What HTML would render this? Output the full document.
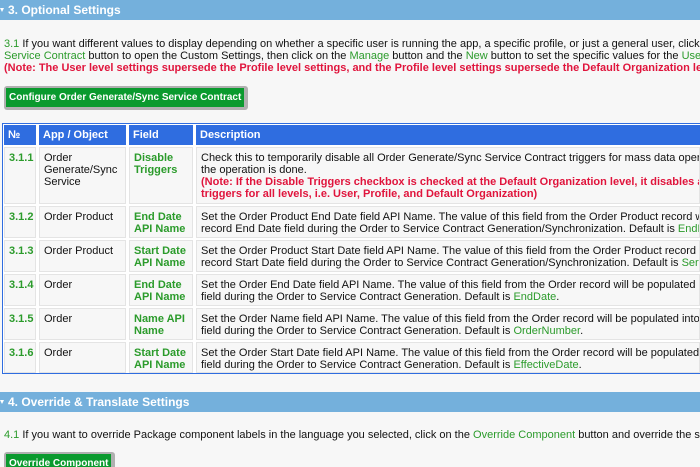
<!DOCTYPE html><html><head><style>
body{margin:0;width:700px;height:467px;overflow:hidden;background:#f7f7f7;font-family:"Liberation Sans",Arial,sans-serif;font-size:11px;color:#111;position:relative}
#w{position:absolute;left:0;top:0;width:700px;height:467px;overflow:hidden}
.sec{position:absolute;left:0;width:700px;height:20px;background:#74b0dc;color:#fff;font-weight:bold;font-size:12px;line-height:20px}
.sec span{position:absolute;left:8px}
.sec i{position:absolute;left:0;top:8px;border-left:2px solid transparent;border-right:2px solid transparent;border-top:4px solid #fff;width:0;height:0}
.p{position:absolute;left:4px;width:696px;overflow:hidden;white-space:nowrap;line-height:12px}
.g{color:#2b9b2b}.r{color:#e0143c;font-weight:bold}
.btn{position:absolute;background:#b0b0b0;border-radius:3px;padding:2px 4px 3px 2px}
.btn div{background:#0a9a2e;color:#fff;font-weight:bold;font-size:10px;padding:0 3px;line-height:19px;white-space:nowrap}
.tbl{position:absolute;left:2px;top:123px;width:698px;height:251px;border:1px solid #2f6de0;border-right:none;background:#fff;box-sizing:border-box}
.c{position:absolute;overflow:hidden;white-space:nowrap;line-height:12px;background:#f7f7f7;border:1px solid #e4e4e4;box-sizing:border-box;padding:4px 0 0 4px}
.h{background:#2f6de0;color:#fff;font-weight:bold;font-size:11px;padding-top:4px;border:none}
.n{color:#2b9b2b;font-weight:bold}
.f{color:#2b9b2b;font-weight:bold}
.d{width:504px}
</style></head><body><div id="w">
<div class="sec" style="top:0"><i></i><span>3. Optional Settings</span></div>
<div class="p" style="top:38px"><span class="g">3.1</span> If you want different values to display depending on whether a specific user is running the app, a specific profile, or just a general user, click on the <span class="g">Configure Order Generate/Sync</span></div>
<div class="p" style="top:50px"><span class="g">Service Contract</span> button to open the Custom Settings, then click on the <span class="g">Manage</span> button and the <span class="g">New</span> button to set the specific values for the <span class="g">User</span></div>
<div class="p r" style="top:62px;font-weight:bold">(Note: The User level settings supersede the Profile level settings, and the Profile level settings supersede the Default Organization level settings.)</div>
<div class="btn" style="left:4px;top:86px"><div>Configure Order Generate/Sync Service Contract</div></div>
<div class="tbl"></div>
<div class="c h" style="left:4px;top:125px;width:32px;height:20px">№</div>
<div class="c h" style="left:39px;top:125px;width:87px;height:20px">App / Object</div>
<div class="c h" style="left:129px;top:125px;width:64px;height:20px">Field</div>
<div class="c h d" style="left:196px;top:125px;height:20px">Description</div>

<div class="c n" style="left:4px;top:147px;width:32px;height:57px">3.1.1</div>
<div class="c" style="left:39px;top:147px;width:87px;height:57px">Order<br>Generate/Sync<br>Service</div>
<div class="c f" style="left:129px;top:147px;width:64px;height:57px">Disable<br>Triggers</div>
<div class="c d" style="left:196px;top:147px;height:57px">Check this to temporarily disable all Order Generate/Sync Service Contract triggers for mass data operations<br>the operation is done.<br><span class="r">(Note: If the Disable Triggers checkbox is checked at the Default Organization level, it disables all<br>triggers for all levels, i.e. User, Profile, and Default Organization)</span></div>

<div class="c n" style="left:4px;top:206px;width:32px;height:32px">3.1.2</div>
<div class="c" style="left:39px;top:206px;width:87px;height:32px">Order Product</div>
<div class="c f" style="left:129px;top:206px;width:64px;height:32px">End Date<br>API Name</div>
<div class="c d" style="left:196px;top:206px;height:32px">Set the Order Product End Date field API Name. The value of this field from the Order Product record will<br>record End Date field during the Order to Service Contract Generation/Synchronization. Default is <span class="g">EndDate</span></div>

<div class="c n" style="left:4px;top:240px;width:32px;height:32px">3.1.3</div>
<div class="c" style="left:39px;top:240px;width:87px;height:32px">Order Product</div>
<div class="c f" style="left:129px;top:240px;width:64px;height:32px">Start Date<br>API Name</div>
<div class="c d" style="left:196px;top:240px;height:32px">Set the Order Product Start Date field API Name. The value of this field from the Order Product record will<br>record Start Date field during the Order to Service Contract Generation/Synchronization. Default is <span class="g">ServiceDate</span></div>

<div class="c n" style="left:4px;top:274px;width:32px;height:32px">3.1.4</div>
<div class="c" style="left:39px;top:274px;width:87px;height:32px">Order</div>
<div class="c f" style="left:129px;top:274px;width:64px;height:32px">End Date<br>API Name</div>
<div class="c d" style="left:196px;top:274px;height:32px">Set the Order End Date field API Name. The value of this field from the Order record will be populated into<br>field during the Order to Service Contract Generation. Default is <span class="g">EndDate</span>.</div>

<div class="c n" style="left:4px;top:308px;width:32px;height:32px">3.1.5</div>
<div class="c" style="left:39px;top:308px;width:87px;height:32px">Order</div>
<div class="c f" style="left:129px;top:308px;width:64px;height:32px">Name API<br>Name</div>
<div class="c d" style="left:196px;top:308px;height:32px">Set the Order Name field API Name. The value of this field from the Order record will be populated into the<br>field during the Order to Service Contract Generation. Default is <span class="g">OrderNumber</span>.</div>

<div class="c n" style="left:4px;top:342px;width:32px;height:31px">3.1.6</div>
<div class="c" style="left:39px;top:342px;width:87px;height:31px">Order</div>
<div class="c f" style="left:129px;top:342px;width:64px;height:31px">Start Date<br>API Name</div>
<div class="c d" style="left:196px;top:342px;height:31px">Set the Order Start Date field API Name. The value of this field from the Order record will be populated into<br>field during the Order to Service Contract Generation. Default is <span class="g">EffectiveDate</span>.</div>

<div class="sec" style="top:392px"><i></i><span>4. Override &amp; Translate Settings</span></div>
<div class="p" style="top:429px"><span class="g">4.1</span> If you want to override Package component labels in the language you selected, click on the <span class="g">Override Component</span> button and override the selected labels.</div>
<div class="btn" style="left:4px;top:452px"><div>Override Component</div></div>
</div></body></html>
